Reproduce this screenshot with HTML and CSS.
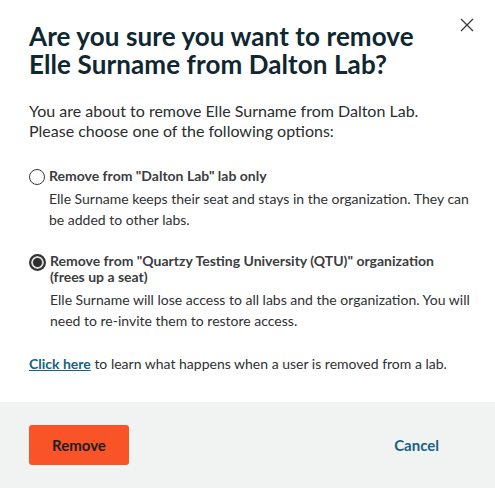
FILE: index.html
```html
<!DOCTYPE html>
<html>
<head>
<meta charset="utf-8">
<link rel="stylesheet" href="styles.css">
</head>
<body>
<div class="modal">
  <div class="content">
    <button class="close" aria-label="Close">
      <svg width="14" height="14" viewBox="0 0 14 14"><path d="M1 1L13 13M13 1L1 13" stroke="#3a3a3a" stroke-width="1.3" fill="none"/></svg>
    </button>
    <h1 class="title">Are you sure you want to remove Elle Surname from Dalton Lab?</h1>
    <p class="intro">You are about to remove Elle Surname from Dalton Lab.<br>Please choose one of the following options:</p>
    <div class="option">
      <span class="radio"></span>
      <div class="opt-text">
        <div class="opt-label">Remove from "Dalton Lab" lab only</div>
        <div class="opt-desc">Elle Surname keeps their seat and stays in the organization. They can be added to other labs.</div>
      </div>
    </div>
    <div class="option second">
      <span class="radio checked"></span>
      <div class="opt-text">
        <div class="opt-label">Remove from "Quartzy Testing University (QTU)" organization<br>(frees up a seat)</div>
        <div class="opt-desc">Elle Surname will lose access to all labs and the organization. You will need to re-invite them to restore access.</div>
      </div>
    </div>
    <p class="learn"><a href="#" class="link">Click here</a> to learn what happens when a user is removed from a lab.</p>
  </div>
  <div class="footer">
    <button class="btn-remove">Remove</button>
    <a href="#" class="cancel">Cancel</a>
  </div>
</div>
</body>
</html>
```
FILE: styles.css
```css
* { box-sizing: border-box; }
html, body { margin: 0; padding: 0; background: #fff; }
body { font-family: "Lato", "Liberation Sans", sans-serif; color: #2a2d2e; }
.modal { width: 495px; height: 488px; display: flex; flex-direction: column; }
.content { position: relative; padding: 22px 17px 0 29px; height: 402px; }
.close { position: absolute; top: 18px; right: 21px; width: 14px; height: 14px; padding: 0; border: 0; background: none; display: flex; }
.title { margin: 0; font-size: 26px; line-height: 28px; font-weight: 700; color: #0e2730; letter-spacing: 0.1px; width: 400px; }
.intro { margin: 23px 0 0 0; font-size: 16px; line-height: 20px; color: #2a2d2e; }
.option { display: flex; margin-top: 27px; }
.option.second { margin-top: 23px; }
.radio { width: 16px; height: 16px; border: 1.3px solid #3a3a3a; border-radius: 50%; flex: none; margin-top: 1px; margin-right: 4px; }
.radio.checked { border: 2px solid #333; width: 17px; height: 17px; background: #2d2d2d; box-shadow: inset 0 0 0 2px #dcdcdc; }
.opt-label { font-size: 14px; line-height: 16px; font-weight: 700; color: #3b3d3f; }
.opt-desc { margin-top: 4px; font-size: 14px; line-height: 21px; color: #2e3133; }
.learn { margin: 23px 0 0 0; font-size: 14px; line-height: 20px; color: #2e3133; }
.link { color: #146183; font-weight: 700; text-decoration: underline; }
.footer { flex: 1; background: #f1f3f2; display: flex; align-items: center; justify-content: space-between; padding: 0 56px 0 29px; }
.btn-remove { width: 100px; height: 40px; background: #f85428; border: 0; border-radius: 3px; font-family: inherit; font-size: 15px; font-weight: 700; color: #1e1e1e; }
.cancel { color: #166285; font-size: 15px; font-weight: 700; text-decoration: none; }
```
